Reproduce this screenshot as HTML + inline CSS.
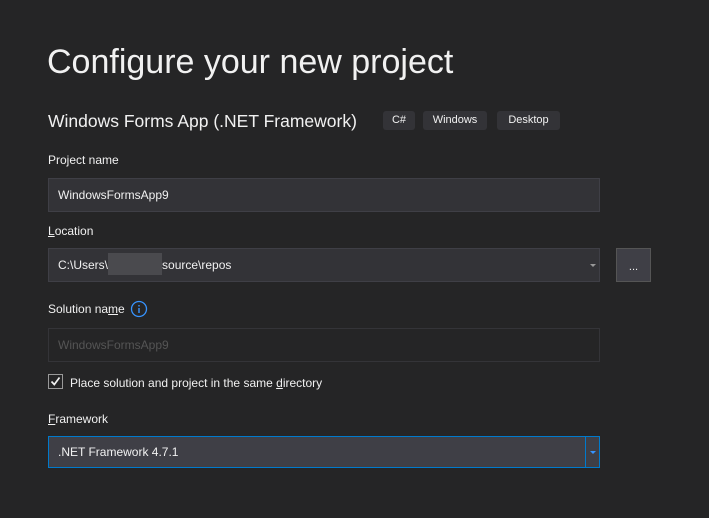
<!DOCTYPE html>
<html><head><style>
body{margin:0;width:709px;height:518px;background:#252526;font-family:"Liberation Sans",sans-serif;color:#f1f1f1;position:relative;overflow:hidden}
.a{position:absolute}
.lbl{font-size:12px;color:#f1f1f1}
.inp{position:absolute;left:48px;width:552px;height:32px;background:#333337;border:1px solid #3f3f46;box-sizing:border-box;font-size:12px;line-height:30px;padding-left:9px}
.tag{position:absolute;top:111px;height:19px;background:#333337;border-radius:3px;font-size:11px;line-height:19px;text-align:center}
</style></head><body>
<div class="a" style="left:47px;top:43px;font-size:34px;color:#f1f1f1">Configure your new project</div>
<div class="a" style="left:48px;top:111px;font-size:17.5px">Windows Forms App (.NET Framework)</div>
<div class="tag" style="left:383px;width:32px">C#</div>
<div class="tag" style="left:423px;width:64px">Windows</div>
<div class="tag" style="left:497px;width:63px">Desktop</div>
<div class="a lbl" style="left:48px;top:153px">Project name</div>
<div class="inp" style="top:178px;height:34px;line-height:32px">WindowsFormsApp9</div>
<div class="a lbl" style="left:48px;top:224px"><u>L</u>ocation</div>
<div class="inp" style="top:248px;height:34px;line-height:32px">C:\Users\<span style="display:inline-block;width:54px;height:22px;background:#4a4a4e;vertical-align:middle;margin-top:-3px"></span>source\repos</div>
<div class="a" style="left:590px;top:264px;width:0;height:0;border-left:3px solid transparent;border-right:3px solid transparent;border-top:3px solid #999"></div>
<div class="a" style="left:616px;top:248px;width:35px;height:34px;background:#3f3f46;border:1px solid #555;box-sizing:border-box;text-align:center;font-size:11px;line-height:36px">...</div>
<div class="a lbl" style="left:48px;top:302px">Solution na<u>m</u>e</div>
<svg class="a" style="left:130px;top:300px" width="18" height="18"><circle cx="9" cy="9" r="7.5" fill="none" stroke="#3794ff" stroke-width="1.3"/><rect x="8.3" y="8" width="1.4" height="5" fill="#3794ff"/><rect x="8.3" y="5" width="1.4" height="1.5" fill="#3794ff"/></svg>
<div class="inp" style="top:328px;height:34px;line-height:32px;background:#252526;border-color:#343438;color:#555">WindowsFormsApp9</div>
<div class="a" style="left:48px;top:374px;width:15px;height:15px;border:1px solid #999;box-sizing:border-box"></div>
<svg class="a" style="left:48px;top:374px" width="15" height="15"><path d="M3.5 7.5 L6.3 10.5 L11.5 3.5" fill="none" stroke="#f1f1f1" stroke-width="1.7"/></svg>
<div class="a lbl" style="left:70px;top:376px">Place solution and project in the same <u>d</u>irectory</div>
<div class="a lbl" style="left:48px;top:412px"><u>F</u>ramework</div>
<div class="inp" style="top:436px;height:32px;background:#3f3f46;border-color:#007acc;line-height:30px">.NET Framework 4.7.1</div>
<div class="a" style="left:585px;top:437px;width:1px;height:30px;background:#007acc"></div>
<div class="a" style="left:590px;top:451px;width:0;height:0;border-left:3px solid transparent;border-right:3px solid transparent;border-top:3px solid #3794ff"></div>
</body></html>
